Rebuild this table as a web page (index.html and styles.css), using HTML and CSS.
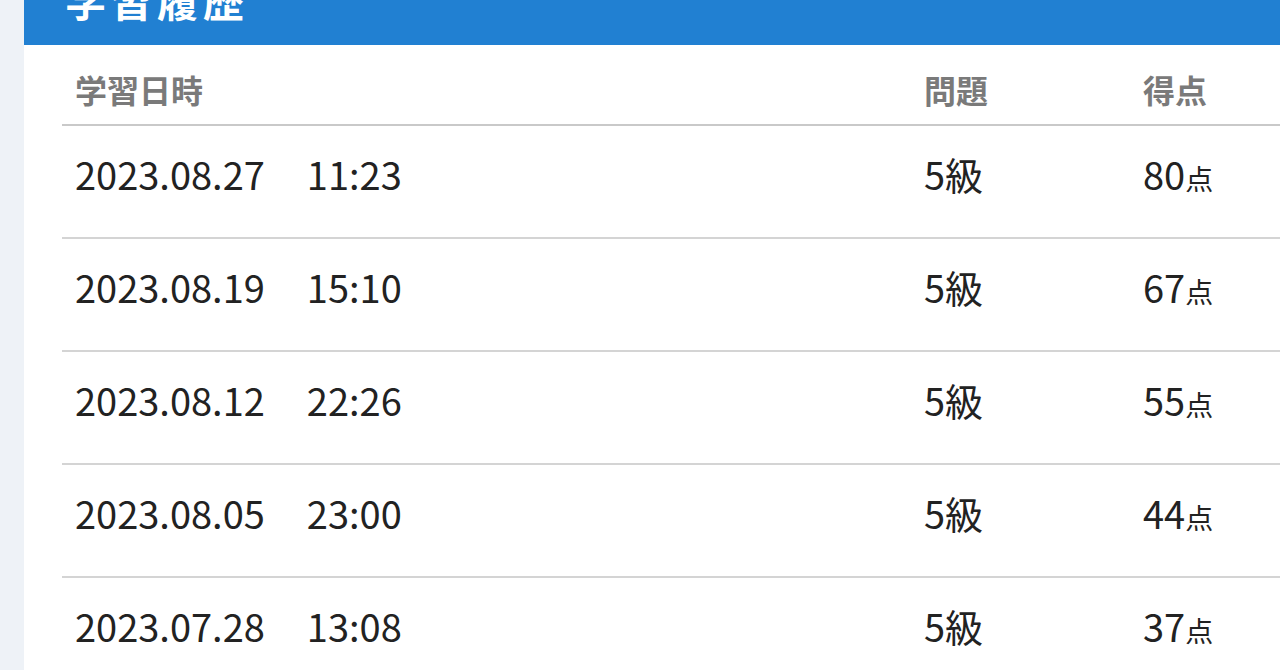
FILE: index.html
```html
<!DOCTYPE html>
<html lang="ja">
<head>
<meta charset="utf-8">
<title>学習履歴</title>
<link rel="stylesheet" href="styles.css">
</head>
<body>
<div class="page">
  <section class="card">
    <header class="card-head">
      <h1 class="card-title">学習履歴</h1>
    </header>
    <div class="card-body">
      <table class="history">
        <thead>
          <tr>
            <th class="col-date">学習日時</th>
            <th class="col-level">問題</th>
            <th class="col-score">得点</th>
          </tr>
        </thead>
        <tbody>
          <tr>
            <td class="col-date">2023.08.27<span class="gap"></span>11:23</td>
            <td class="col-level">5級</td>
            <td class="col-score">80<span class="unit">点</span></td>
          </tr>
          <tr>
            <td class="col-date">2023.08.19<span class="gap"></span>15:10</td>
            <td class="col-level">5級</td>
            <td class="col-score">67<span class="unit">点</span></td>
          </tr>
          <tr>
            <td class="col-date">2023.08.12<span class="gap"></span>22:26</td>
            <td class="col-level">5級</td>
            <td class="col-score">55<span class="unit">点</span></td>
          </tr>
          <tr>
            <td class="col-date">2023.08.05<span class="gap"></span>23:00</td>
            <td class="col-level">5級</td>
            <td class="col-score">44<span class="unit">点</span></td>
          </tr>
          <tr>
            <td class="col-date">2023.07.28<span class="gap"></span>13:08</td>
            <td class="col-level">5級</td>
            <td class="col-score">37<span class="unit">点</span></td>
          </tr>
        </tbody>
      </table>
    </div>
  </section>
</div>
</body>
</html>
```

FILE: styles.css
```css
html, body {
  margin: 0;
  padding: 0;
}

body {
  background: #eef2f7;
  font-family: "Noto Sans CJK JP", "Noto Sans", sans-serif;
  color: #222;
  overflow: hidden;
  height: 670px;
}

.page {
  padding-left: 24px;
  height: 670px;
}

.card {
  background: #fff;
  height: 100%;
}

.card-head {
  background: #2180d2;
  height: 45px;
  overflow: hidden;
  padding-left: 41px;
}

.card-title {
  margin: -21px 0 0;
  font-size: 41px;
  line-height: 41px;
  font-weight: 700;
  color: #fff;
  letter-spacing: 5px;
}

.card-body {
  padding-left: 38px;
}

.history {
  width: 100%;
  border-collapse: collapse;
}

.history th,
.history td {
  text-align: left;
  padding-left: 13px;
  border-bottom: 2px solid #d4d4d4;
}

.history th {
  font-size: 32px;
  line-height: 45px;
  font-weight: 700;
  color: #7a7a7a;
  padding-top: 22px;
  padding-bottom: 12px;
  border-bottom-color: #c9c9c9;
}

.history td {
  font-size: 38px;
  line-height: 57px;
  font-weight: 400;
  color: #222;
  padding-top: 19px;
  padding-bottom: 35px;
}

.col-date {
  width: 835px;
}

.col-level {
  width: 205px;
}

.gap {
  display: inline-block;
  width: 42px;
}

.unit {
  font-size: 28px;
  line-height: 0;
  margin-left: 0;
}
```
